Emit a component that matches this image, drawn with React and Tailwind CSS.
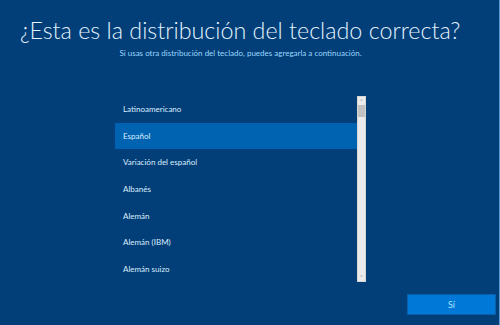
import { useState } from 'react'

const layouts = [
  'Latinoamericano',
  'Español',
  'Variación del español',
  'Albanés',
  'Alemán',
  'Alemán (IBM)',
  'Alemán suizo',
]

export default function App() {
  const [selected, setSelected] = useState('Español')

  return (
    <div className="flex h-[325px] w-[500px] overflow-hidden bg-[#023e77] font-['Lato',sans-serif]">
      <div className="flex flex-1 flex-col">
        <h1 className="mt-[16px] whitespace-nowrap pl-[20px] text-[23.3px] font-light leading-[28px] text-[#e3f3ff]">
          ¿Esta es la distribución del teclado correcta?
        </h1>
        <p className="mt-[4px] pr-[18px] text-center text-[8px] leading-[10px] text-[#9ad8ff]">
          Si usas otra distribución del teclado, puedes agregarla a continuación.
        </p>

        <div className="ml-[115px] mt-[38px] flex h-[186px] w-[251px]">
          <ul className="flex flex-1 flex-col">
            {layouts.map((name) => (
              <li
                key={name}
                onClick={() => setSelected(name)}
                className={`flex h-[27.2px] items-center pl-[8px] text-[8px] text-[#dcefff] ${
                  selected === name ? 'bg-[#0063b1]' : ''
                }`}
              >
                {name}
              </li>
            ))}
          </ul>
          <div className="flex w-[9px] flex-col border border-[#d6d6d6] bg-[#ebebeb]">
            <div className="flex h-[8px] items-center justify-center text-[6px] leading-none text-[#a0a0a0]">˄</div>
            <div className="h-[12px] bg-[#c2c2c2]" />
            <div className="flex-1" />
            <div className="flex h-[8px] items-center justify-center text-[6px] leading-none text-[#a0a0a0]">˅</div>
          </div>
        </div>

        <div className="mt-[12px] flex justify-end pr-[3px]">
          <button className="h-[21px] w-[89px] border border-[#0a5fa8] bg-[#0078d7] text-[9px] text-[#a9e4ff]">
            Sí
          </button>
        </div>
      </div>
      <div className="w-px bg-[#5e9ad6]" />
    </div>
  )
}
